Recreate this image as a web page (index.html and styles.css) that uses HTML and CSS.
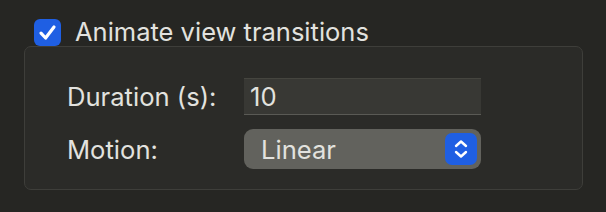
FILE: index.html
```html
<!DOCTYPE html>
<html lang="en">
<head>
<meta charset="UTF-8">
<title>Animation settings</title>
<link rel="stylesheet" href="styles.css">
</head>
<body>
<div class="pane">
    <label class="check-row">
        <span class="checkbox">
            <svg width="27" height="27" viewBox="0 0 27 27">
                <path d="M7 14.2 L11.6 19 L20 8" fill="none" stroke="#fff" stroke-width="3.2" stroke-linecap="round" stroke-linejoin="round"/>
            </svg>
        </span>
        <span class="check-label">Animate view transitions</span>
    </label>
    <div class="group">
        <div class="form">
            <span class="label">Duration (s):</span>
            <div class="field">10</div>
            <span class="label">Motion:</span>
            <div class="popup">
                <span class="popup-value">Linear</span>
                <span class="stepper">
                    <svg width="32" height="32" viewBox="0 0 32 32">
                        <path d="M11 13 L16 8.5 L21 13" fill="none" stroke="#fff" stroke-width="2.4" stroke-linecap="round" stroke-linejoin="round"/>
                        <path d="M11 19 L16 23.5 L21 19" fill="none" stroke="#fff" stroke-width="2.4" stroke-linecap="round" stroke-linejoin="round"/>
                    </svg>
                </span>
            </div>
        </div>
    </div>
</div>
</body>
</html>
```
FILE: styles.css
```css
/* Basic styling */
body {
    margin: 0;
    background-color: #262623;
    font-family: Inter, "Noto Sans", sans-serif;
    color: #e2e2df;
}
.pane {
    width: 606px;
    height: 212px;
    padding-top: 18px;
    box-sizing: border-box;
}
.check-row {
    display: flex;
    align-items: center;
    margin-left: 34px;
    height: 28px;
}
.checkbox {
    width: 27px;
    height: 27px;
    border-radius: 6px;
    background-color: #1f5fe3;
    display: flex;
}
.check-label {
    margin-left: 14px;
    font-size: 25.5px;
    line-height: 28px;
}
.group {
    margin: 0 23px 0 24px;
    height: 144px;
    box-sizing: border-box;
    border: 1px solid #3e3e3a;
    border-radius: 7px;
    background-color: #2b2b28;
    padding: 31px 0 0 42px;
}
.form {
    display: grid;
    grid-template-columns: 177px 237px;
    row-gap: 14px;
    align-items: center;
}
.label {
    font-size: 25.6px;
}
.field {
    height: 37px;
    box-sizing: border-box;
    background-color: #383834;
    border-top: 1px solid #45453f;
    border-bottom: 1px solid #5a5a55;
    font-size: 25.6px;
    line-height: 35px;
    padding-left: 6px;
}
.popup {
    height: 40px;
    box-sizing: border-box;
    background-color: #62625d;
    border-radius: 9px;
    display: flex;
    align-items: center;
    justify-content: space-between;
    padding: 0 4px 0 17px;
}
.popup-value {
    font-size: 25.6px;
}
.stepper {
    width: 32px;
    height: 32px;
    border-radius: 7px;
    background-color: #1f5fe3;
    display: flex;
}
```
